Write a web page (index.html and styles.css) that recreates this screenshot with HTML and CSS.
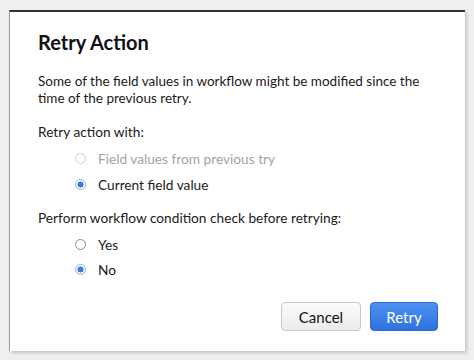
FILE: index.html
```html
<!DOCTYPE html>
<html>
<head>
<meta charset="utf-8">
<link rel="stylesheet" href="styles.css">
</head>
<body>
<div class="dialog">
  <h1 class="title">Retry Action</h1>
  <p class="desc">Some of the field values in workflow might be modified since the time of the previous retry.</p>
  <div class="group">
    <div class="label">Retry action with:</div>
    <div class="options">
      <div class="opt disabled"><span class="radio"></span><span>Field values from previous try</span></div>
      <div class="opt"><span class="radio checked"></span><span>Current field value</span></div>
    </div>
  </div>
  <div class="group">
    <div class="label">Perform workflow condition check before retrying:</div>
    <div class="options">
      <div class="opt"><span class="radio"></span><span>Yes</span></div>
      <div class="opt"><span class="radio checked"></span><span>No</span></div>
    </div>
  </div>
  <div class="footer">
    <button class="btn cancel">Cancel</button>
    <button class="btn primary">Retry</button>
  </div>
</div>
</body>
</html>
```

FILE: styles.css
```css
html, body { margin: 0; padding: 0; }
body {
  width: 474px;
  height: 360px;
  box-sizing: border-box;
  padding: 10px 9px 9px 9px;
  background: #efefef;
  font-family: Lato, "Open Sans", sans-serif;
  color: #1a1a1a;
}
.dialog {
  box-sizing: border-box;
  width: 456px;
  height: 341px;
  background: #fff;
  border-top: 2px solid #333;
  border-left: 1px solid #9a9a9a;
  box-shadow: 2px 2px 3px rgba(0,0,0,0.18);
  padding: 18px 20px 0 28px;
  display: flex;
  flex-direction: column;
}
.title {
  margin: 0;
  font-size: 20px;
  font-weight: 700;
  line-height: 24px;
  color: #111;
}
.desc {
  margin: 19px 0 0;
  font-size: 13.5px;
  line-height: 17px;
}
.group { margin-top: 16px; }
.label { font-size: 13.7px; line-height: 17px; }
.options {
  display: flex;
  flex-direction: column;
  gap: 8.5px;
  margin-top: 10px;
  padding-left: 37px;
}
.opt {
  display: flex;
  align-items: center;
  gap: 12px;
  font-size: 13.7px;
  line-height: 17px;
}
.opt.disabled { color: #a3a3a3; }
.radio {
  box-sizing: border-box;
  width: 11px;
  height: 11px;
  border-radius: 50%;
  border: 1px solid #8c8c8c;
  background: #fff;
  flex: none;
}
.opt.disabled .radio { border-color: #cfcfcf; }
.radio.checked {
  border-color: #8fb2e6;
  background: radial-gradient(circle, #3f7bdb 0, #3f7bdb 2.8px, #fff 3.3px);
}
.footer {
  margin-top: auto;
  margin-bottom: 20px;
  display: flex;
  justify-content: flex-end;
  gap: 9px;
  padding-right: 7px;
}
.btn {
  box-sizing: border-box;
  height: 29px;
  border-radius: 4px;
  font-family: Lato, "Open Sans", sans-serif;
  font-size: 15px;
  padding: 0;
}
.cancel {
  width: 80px;
  border: 1px solid #c8c8c8;
  background: linear-gradient(#fbfbfb, #ebebeb);
  color: #111;
}
.primary {
  width: 68px;
  border: 1px solid #2b68cf;
  background: linear-gradient(#4b92f2, #2f71de);
  color: #fff;
}
```
